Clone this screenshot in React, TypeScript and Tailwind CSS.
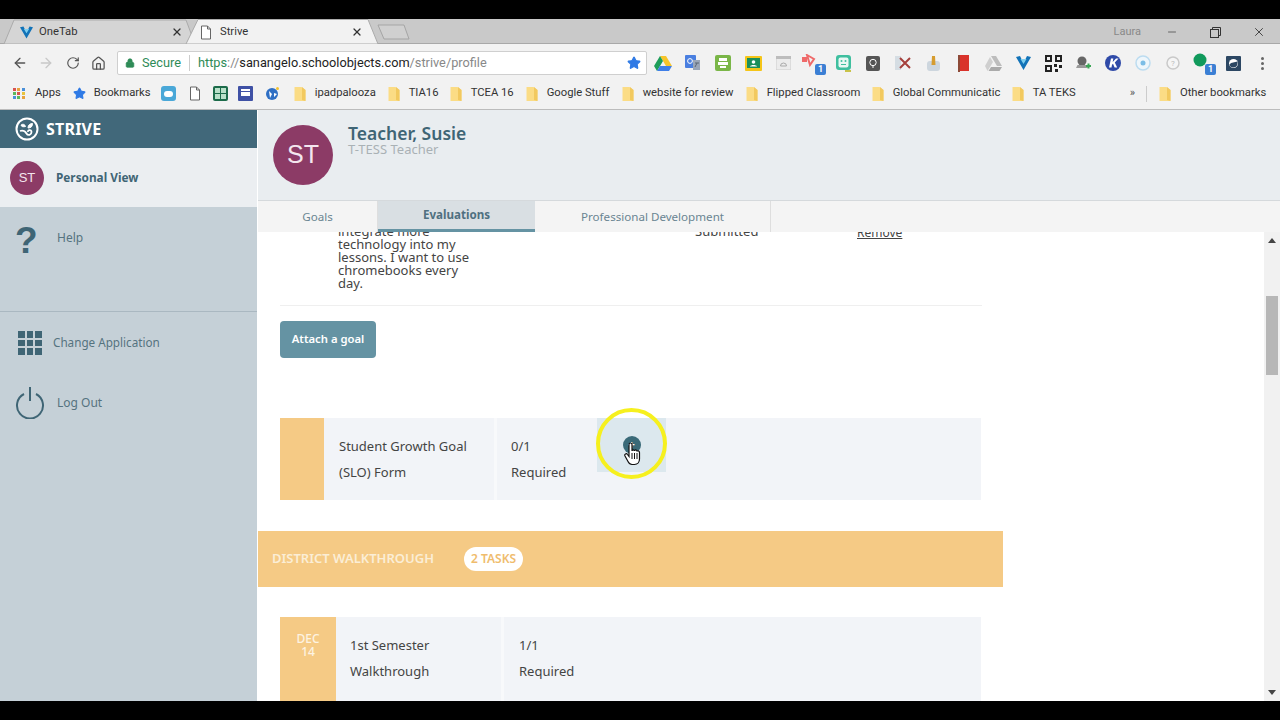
import { ArrowLeft, ArrowRight, RotateCw, Home, Star, Lock, X, Minus } from 'lucide-react';
import type { ReactNode } from 'react';

const Badge = () => (
  <span className="absolute left-[17px] top-[13px] flex h-[11px] w-[11px] items-center justify-center rounded-[2px] bg-[#3b7fd4] text-[9px] font-bold leading-none text-white">1</span>
);

const Folder = () => (
  <svg width="12" height="16" viewBox="0 0 12 16" className="shrink-0">
    <path d="M0.5 1h7l4 3v11h-11z" fill="#fbdc85" />
    <path d="M8 1v13l3.5 1V4z" fill="#f2c95f" />
  </svg>
);

const DocIcon = () => (
  <svg width="12" height="15" viewBox="0 0 12 15" fill="none" stroke="#666">
    <path d="M1.5 1h6l3 3v10h-9z" fill="#fff" />
    <path d="M7.5 1v3h3" />
  </svg>
);

const extIcons: ReactNode[] = [
  <svg width="18" height="16" viewBox="0 0 18 16"><path d="M6 1h6l6 10h-6z" fill="#f7c52b" /><path d="M6 1L0 11l3 5 6-10z" fill="#1e9e5a" /><path d="M3 16h12l3-5H6z" fill="#3f7fe8" /></svg>,
  <svg width="16" height="16" viewBox="0 0 16 16"><rect x="0" y="0" width="11" height="13" rx="1" fill="#4a7fe0" /><circle cx="5" cy="6" r="2.4" fill="none" stroke="#fff" /><path d="M8 5h7v10H8z" fill="#9aa6b8" /><path d="M10 8h4M12 8l-2 4" stroke="#5b6675" /></svg>,
  <svg width="16" height="16" viewBox="0 0 16 16"><rect width="16" height="16" rx="2" fill="#7ab648" /><rect x="4" y="3" width="8" height="3" fill="#fff" /><path d="M3 7h10v3H3z" fill="#fff" /><path d="M5 11h6v2H5z" fill="#fff" /></svg>,
  <svg width="17" height="15" viewBox="0 0 17 15"><rect width="17" height="15" rx="1" fill="#f5c518" /><rect x="2" y="2" width="13" height="10" fill="#1b8f5b" /><circle cx="8.5" cy="6" r="1.8" fill="#fff" /><path d="M5 10.5c.5-2 6.500-2 7 0z" fill="#fff" /></svg>,
  <svg width="15" height="14" viewBox="0 0 15 14"><rect width="15" height="14" rx="1" fill="#ececec" stroke="#ccc" /><rect width="15" height="3" fill="#bdbdbd" /><path d="M4.500 10a3 3 0 116 0z" fill="none" stroke="#aaa" /></svg>,
  <svg width="14" height="14" viewBox="0 0 14 14" fill="#ef6a6a" className="-translate-x-[4px] -translate-y-[2px]"><rect x="0" y="3" width="5" height="5" /><path d="M5 1l7 4-4 6z" fill="none" stroke="#ef6a6a" strokeWidth="2" /></svg>,
  <svg width="15" height="17" viewBox="0 0 15 17"><rect width="15" height="15" rx="3" fill="#3fbf9f" /><rect x="2.500" y="2.500" width="10" height="10" rx="2" fill="#e9f8f4" /><circle cx="5.500" cy="6" r="1" fill="#3fbf9f" /><circle cx="9.500" cy="6" r="1" fill="#3fbf9f" /><path d="M5 9.500h5" stroke="#3fbf9f" /><path d="M9 15h6v2H9z" fill="#c9c34a" /></svg>,
  <svg width="14" height="15" viewBox="0 0 14 15"><rect width="14" height="15" rx="2" fill="#555" /><circle cx="7" cy="6.500" r="3.200" fill="none" stroke="#fff" /><path d="M6 11h2" stroke="#fff" /></svg>,
  <svg width="17" height="16" viewBox="0 0 17 16"><rect x="0" y="1" width="6" height="14" fill="#d5dde3" /><path d="M5 3l10 10M15 3L5 13" stroke="#a5403c" strokeWidth="2" /></svg>,
  <svg width="15" height="17" viewBox="0 0 15 17"><rect x="1" y="6" width="13" height="10" rx="3" fill="#cdd6de" /><path d="M6 1h3l.5 9h-4z" fill="#d69c2f" /></svg>,
  <svg width="11" height="17" viewBox="0 0 11 17"><rect width="11" height="16" fill="#d9332b" /><rect width="2" height="17" fill="#8d4a38" /></svg>,
  <svg width="17" height="15" viewBox="0 0 17 15" fill="#bdbdbd"><path d="M6 0h5l6 10h-5z" /><path d="M5 1L0 10l2.500 5L8 6z" fill="#cfcfcf" /><path d="M3.500 15h11l2.500-4H6z" fill="#aaa" /></svg>,
  <svg width="15" height="14" viewBox="0 0 15 14"><path d="M0 1l4-1 3.500 7L11 0l4 1-7.500 13z" fill="#1273b8" /><path d="M4.500 3h6L7.500 8z" fill="#7fd0f0" /></svg>,
  <svg width="17" height="17" viewBox="0 0 17 17" fill="#222"><path d="M0 0h7v7H0zM10 0h7v7h-7zM0 10h7v7H0z" /><path d="M2 2h3v3H2zM12 2h3v3h-3zM2 12h3v3H2z" fill="#eee" /><path d="M9 9h3v3H9zM14 10h3v3h-3zM10 14h3v3h-3z" /></svg>,
  <svg width="17" height="16" viewBox="0 0 17 16"><circle cx="7" cy="6" r="4.500" fill="#666" /><path d="M1 13h12l-1.500-3h-9z" fill="#999" /><path d="M11 11h5M13.500 8.500v5" stroke="#3aa655" strokeWidth="2" /></svg>,
  <svg width="16" height="16" viewBox="0 0 16 16"><circle cx="8" cy="8" r="8" fill="#2f4aa8" /><path d="M6 3.500h2.300L7.700 7 11 3.500h2.500L9.800 7.500l2.400 5H9.600L8 8.800l-1 1-.5 2.700H4z" fill="#fff" /></svg>,
  <svg width="16" height="16" viewBox="0 0 16 16"><circle cx="8" cy="8" r="7" fill="#eef6fb" stroke="#bcdcf0" strokeWidth="1.500" /><circle cx="8" cy="8" r="2.500" fill="#7cbde6" /></svg>,
  <svg width="14" height="14" viewBox="0 0 14 14"><circle cx="7" cy="7" r="6" fill="#f5f5f5" stroke="#c9c9c9" strokeWidth="1.500" /><text x="7" y="10" textAnchor="middle" fontSize="8" fill="#bbb" fontFamily="Roboto, sans-serif">?</text></svg>,
  <svg width="14" height="14" viewBox="0 0 14 14" className="-translate-x-[3px] -translate-y-[3px]"><circle cx="7" cy="7" r="6.500" fill="#119a5c" /></svg>,
  <svg width="15" height="15" viewBox="0 0 15 15"><rect width="15" height="15" rx="1" fill="#2c4763" /><circle cx="7.500" cy="7.500" r="4.500" fill="#fff" /><path d="M3.500 8.500c2-2.500 5-2 8-3 .5 3-1 6-4 6s-4-1.500-4-3z" fill="#2c4763" /></svg>,
];

const badged = [5, 18];

const bookmarks = [
  { label: 'ipadpalooza', w: 94 },
  { label: 'TIA16', w: 62 },
  { label: 'TCEA 16', w: 76 },
  { label: 'Google Stuff', w: 96 },
  { label: 'website for review', w: 124 },
  { label: 'Flipped Classroom', w: 126 },
  { label: 'Global Communicatic', w: 140 },
  { label: 'TA TEKS', w: 116 },
];

const appFont = { fontFamily: '"Noto Sans", sans-serif' };

function BrowserChrome() {
  return (
    <div className="font-['Roboto',sans-serif] text-[#333]">
      <div className="relative flex h-[25px] items-center border-b border-[#a8a8a8] bg-[#c9c9c9] pt-[2px] text-[11.25px]">
        <svg width="420" height="25" viewBox="0 0 420 25" className="absolute left-0 top-0">
          <path d="M4 25L14 1h172l9 24z" fill="#d5d5d5" stroke="#ababab" />
          <path d="M186 25L198 0.500h170L378 25z" fill="#f2f2f2" stroke="#ababab" />
          <path d="M378 6h26l5 14h-25z" fill="#d0d0d0" stroke="#a5a5a5" />
        </svg>
        <div className="relative flex w-[190px] items-center pl-[20px]">
          <svg width="13" height="13" viewBox="0 0 15 14"><path d="M0 1l4-1 3.500 7L11 0l4 1-7.500 13z" fill="#1273b8" /><path d="M4.500 3h6L7.500 8z" fill="#7fd0f0" /></svg>
          <span className="ml-[6px] w-[94px]">OneTab</span>
          <X size={12} strokeWidth={2.500} className="ml-[38px] text-[#333]" />
        </div>
        <div className="relative flex items-center pl-[10px]">
          <DocIcon />
          <span className="ml-[8px] w-[60px]">Strive</span>
          <X size={12} strokeWidth={2.500} className="ml-[71px] text-[#333]" />
        </div>
        <div className="absolute right-0 top-0 flex h-[25px] items-center pt-[1px] text-[#666]">
          <span className="mr-[25px] text-[11px] text-[#888]">Laura</span>
          <Minus size={12} className="mr-[32px]" />
          <svg width="11" height="11" viewBox="0 0 11 11" fill="none" stroke="#333" className="mr-[31px]"><rect x="0.500" y="2.500" width="8" height="8" /><path d="M2.500 2.500v-2h8v8h-2" /></svg>
          <X size={14} strokeWidth={1.500} className="mr-[14px] text-[#333]" />
        </div>
      </div>

      <div className="flex h-[38px] items-center bg-[#f2f2f2] pl-[12px]">
        <ArrowLeft size={16} className="text-[#555]" />
        <ArrowRight size={16} className="ml-[10px] text-[#c8c8c8]" />
        <RotateCw size={14} className="ml-[12px] text-[#555]" />
        <Home size={15} className="ml-[11px] text-[#555]" />
        <div className="ml-[11px] flex h-[24px] w-[530px] items-center rounded-[2px] border border-[#cfcfcf] bg-white pl-[7px] text-[12.75px]">
          <Lock size={10} className="fill-[#2e8b57] text-[#2e8b57]" />
          <span className="ml-[7px] text-[#2e8b57]">Secure</span>
          <span className="ml-[8px] h-[16px] w-px bg-[#ccc]" />
          <span className="ml-[8px]">
            <span className="text-[#2e8b57]">https</span>
            <span className="text-[#888]">://</span>
            <span className="text-[#222]">sanangelo.schoolobjects.com</span>
            <span className="text-[#888]">/strive/profile</span>
          </span>
          <Star size={14} className="ml-auto mr-[5px] fill-[#2f7ae5] text-[#2f7ae5]" />
        </div>
        <div className="ml-[1px] flex">
          {extIcons.map((icon, i) => (
            <div key={i} className="relative flex h-[24px] w-[30px] items-center justify-center">
              {icon}
              {badged.includes(i) && <Badge />}
            </div>
          ))}
        </div>
        <div className="ml-[13px] flex flex-col gap-[2px]">
          <span className="h-[3px] w-[3px] rounded-full bg-[#666]" />
          <span className="h-[3px] w-[3px] rounded-full bg-[#666]" />
          <span className="h-[3px] w-[3px] rounded-full bg-[#666]" />
        </div>
      </div>

      <div className="flex h-[28px] items-center border-b border-[#bcbcbc] bg-[#f2f2f2] pb-[4px] pl-[13px] text-[11.25px]">
        <div className="grid h-[12px] w-[12px] shrink-0 grid-cols-3 gap-[1px]">
          {['#d9534f', '#e8a33d', '#4a90d9', '#5cb85c', '#d9534f', '#e8c33d', '#4a90d9', '#5cb85c', '#e8a33d'].map((c, i) => (
            <span key={i} className="h-[3px] w-[3px]" style={{ backgroundColor: c }} />
          ))}
        </div>
        <span className="ml-[10px]">Apps</span>
        <Star size={13} className="ml-[12px] fill-[#2f7ae5] text-[#2f7ae5]" />
        <span className="ml-[8px]">Bookmarks</span>
        <div className="ml-[10px] flex h-[15px] w-[15px] items-center justify-center rounded-[3px] bg-[#4aa8d8]">
          <span className="h-[6px] w-[9px] rounded-full bg-white" />
        </div>
        <div className="ml-[13px] flex"><DocIcon /></div>
        <div className="ml-[12px] grid h-[15px] w-[15px] grid-cols-2 gap-[1px] rounded-[2px] bg-[#1c6b4a] p-[2px]">
          <span className="bg-[#b9e0c9]" /><span className="bg-[#b9e0c9]" /><span className="bg-[#b9e0c9]" /><span className="bg-[#b9e0c9]" />
        </div>
        <div className="ml-[10px] flex h-[15px] w-[15px] flex-col gap-[1px] rounded-[1px] bg-[#3f51a5] p-[3px]">
          <span className="h-[2px] bg-white" />
          <span className="h-[4px] w-[9px] bg-white" />
        </div>
        <svg width="15" height="15" viewBox="0 0 15 15" className="ml-[12px] shrink-0">
          <circle cx="7" cy="8" r="6" fill="#2f6fc4" />
          <path d="M4 5l3 3-2 4zM9 7l3 1-3 3z" fill="#fff" />
          <circle cx="12.500" cy="2.500" r="1.500" fill="#f2c230" />
        </svg>
        <div className="ml-[14px] flex">
          {bookmarks.map(b => (
            <div key={b.label} className="flex items-center gap-[9px] overflow-hidden whitespace-nowrap" style={{ width: b.w }}>
              <Folder />
              <span>{b.label}</span>
            </div>
          ))}
        </div>
        <span className="ml-[2px] text-[#555]">»</span>
        <span className="ml-[11px] h-[16px] w-px bg-[#ccc]" />
        <div className="ml-[12px] flex items-center gap-[9px]">
          <Folder />
          <span>Other bookmarks</span>
        </div>
      </div>
    </div>
  );
}

function Sidebar() {
  return (
    <div className="flex w-[257px] shrink-0 flex-col bg-[#c5d0d7] text-[#55737f]">
      <div className="flex h-[38px] items-center bg-[#41687a] pl-[15px] text-white">
        <svg width="24" height="24" viewBox="0 0 24 24" fill="none" stroke="#fff">
          <circle cx="12" cy="12" r="10.500" strokeWidth="2" />
          <path d="M6 8c2-1.500 4-.5 4.500 1.500C8.500 10 6.500 10 6 8zM13 11c0-3 2-4.500 4.500-4.500 0 3-1.500 4.500-4.500 4.500z" fill="#fff" />
          <path d="M5 14c3-1 5 0 6.500 2.500s5 1.500 5-1.500-4-2-3.500 0" strokeWidth="1.800" />
        </svg>
        <span className="ml-[7px] text-[16px] font-bold tracking-[0.2px]">STRIVE</span>
      </div>
      <div className="flex h-[59px] items-center bg-[#ebeef1] pl-[10px]">
        <div className="flex h-[34px] w-[34px] items-center justify-center rounded-full bg-[#8c3b66] font-['Liberation_Sans',sans-serif] text-[13px] text-[#f3e6ee]">ST</div>
        <span className="ml-[12px] text-[11.8px] font-bold text-[#3f6575]">Personal View</span>
      </div>
      <div className="flex h-[105px] border-b border-[#aab8c1] pl-[15px] pt-[15px]">
        <span className="w-[42px] font-['Liberation_Sans',sans-serif] text-[37px] font-bold leading-[37px] text-[#3f6575]">?</span>
        <span className="mt-[8px] text-xs">Help</span>
      </div>
      <div className="flex h-[60px] items-center pl-[18px] pt-[2px]">
        <div className="grid h-[24px] w-[24px] grid-cols-3 gap-[2px]">
          {Array.from({ length: 9 }).map((_, i) => (
            <span key={i} className="bg-[#3f6575]" />
          ))}
        </div>
        <span className="ml-[11px] text-[11.7px]">Change Application</span>
      </div>
      <div className="flex h-[60px] items-center pl-[15px] pt-[2px]">
        <svg width="30" height="32" viewBox="0 0 30 32" fill="none" stroke="#3f6575" strokeWidth="2">
          <path d="M9 7a13 13 0 1012 0" />
          <path d="M15 0v14" />
        </svg>
        <span className="ml-[12px] text-xs">Log Out</span>
      </div>
    </div>
  );
}

function TaskCell({ lines, className }: { lines: string[]; className: string }) {
  return (
    <div className={`pt-[15px] text-[13px] leading-[26px] text-[#444] ${className}`}>
      {lines.map(l => <div key={l}>{l}</div>)}
    </div>
  );
}

function Content() {
  return (
    <div className="relative min-w-0 flex-1 overflow-hidden bg-white">
      <div className="-mt-[7px] ml-[22px] w-[702px]">
        <div className="flex border-b border-[#efefef] pb-[15px] text-[13px] leading-[13px] text-[#444]">
          <div className="ml-[58px] w-[135px]">integrate more technology into my lessons. I want to use chromebooks every day.</div>
          <div className="ml-[222px] w-[162px]">Submitted</div>
          <div className="text-xs underline">Remove</div>
        </div>
        <button className="mt-[15px] flex h-[37px] w-[96px] items-center justify-center rounded-[4px] bg-[#6593a3] text-[11.3px] font-semibold text-white">Attach a goal</button>

        <div className="mt-[60px] flex h-[82px] w-[701px] bg-[#f2f4f8]">
          <div className="w-[44px] bg-[#f5ca85]" />
          <TaskCell lines={['Student Growth Goal', '(SLO) Form']} className="w-[173px] border-r-[3px] border-r-[#f8f9fb] pl-[15px]" />
          <TaskCell lines={['0/1', 'Required']} className="w-[100px] pl-[14px]" />
          <div className="relative flex h-[54px] w-[69px] items-center justify-center bg-[#dce8ee]">
            <div className="flex h-[18px] w-[18px] items-center justify-center rounded-full bg-[#3a6a78] text-xs font-bold leading-none text-white">+</div>
            <div className="absolute left-[-1px] top-[-10px] h-[71px] w-[71px] rounded-full border-[4px] border-[#f6f01e]" />
            <svg width="18" height="24" viewBox="0 0 18 24" className="absolute left-[27px] top-[24px]">
              <path d="M5 2.500c0-2 3-2 3 0V9c0-1.500 2.500-1.500 2.500 0 0-1.500 2.500-1.500 2.500 0.500 0-1 2.500-1 2.500 1V17c0 3-2 5.500-5 5.500H8c-2 0-3-1-4-3L1 14c-1-2 1.500-3 2.500-1.500L5 14.500z" fill="#fff" stroke="#111" strokeWidth="1.200" />
              <path d="M8 11v6M10.500 11v6M13 11v6" stroke="#111" />
            </svg>
          </div>
        </div>

        <div className="-ml-[22px] mt-[31px] flex h-[56px] w-[745px] items-center bg-[#f5ca85] pl-[14px]">
          <span className="text-[13px] font-semibold text-[#fbeed6]">DISTRICT WALKTHROUGH</span>
          <span className="ml-[30px] flex h-[24px] w-[59px] items-center justify-center rounded-full bg-white text-xs font-semibold text-[#efbc6d]">2 TASKS</span>
        </div>

        <div className="mt-[30px] flex h-[90px] w-[701px] bg-[#f2f4f8]">
          <div className="w-[56px] bg-[#f5ca85] pt-[15px] text-center text-xs font-medium leading-[13px] text-[#fdf3e2]">DEC<br />14</div>
          <TaskCell lines={['1st Semester', 'Walkthrough']} className="w-[168px] border-r-[3px] border-r-[#f8f9fb] pl-[14px]" />
          <TaskCell lines={['1/1', 'Required']} className="pl-[15px]" />
        </div>
      </div>
    </div>
  );
}

export default function App() {
  return (
    <div className="flex h-[720px] w-[1280px] flex-col overflow-hidden bg-black">
      <div className="h-[19px] shrink-0 bg-black" />
      <BrowserChrome />
      <div className="flex h-[591px] shrink-0 bg-white" style={appFont}>
        <Sidebar />
        <div className="ml-px flex min-w-0 flex-1 flex-col">
          <div className="flex h-[90px] shrink-0 bg-[#e9edf0] pl-[15px] pt-[15px]">
            <div className="flex h-[60px] w-[60px] items-center justify-center rounded-full bg-[#8c3b66] font-['Liberation_Sans',sans-serif] text-[25px] text-[#f3e6ee]">ST</div>
            <div className="-mt-[1px] ml-[15px]">
              <div className="text-[17.5px] font-semibold leading-[18px] text-[#3f6575]">Teacher, Susie</div>
              <div className="text-[13px] leading-[15px] text-[#a9b1b5]">T-TESS Teacher</div>
            </div>
          </div>
          <div className="flex h-[32px] shrink-0 border-t border-[#d5d9dc] bg-[#f4f4f4] text-[11.6px] text-[#6a8592]">
            <div className="flex w-[120px] items-center justify-center border-r border-[#dedede]">Goals</div>
            <div className="flex w-[157px] items-center justify-center border-b-[3px] border-[#6593a3] bg-[#d9dfe3] font-bold text-[#4f7080]">Evaluations</div>
            <div className="flex w-[236px] items-center justify-center border-r border-[#dedede]">Professional Development</div>
          </div>
          <div className="flex min-h-0 flex-1">
            <Content />
            <div className="relative flex w-[16px] shrink-0 flex-col items-center bg-[#f1f1f1]">
              <span className="mt-[6px] h-0 w-0 border-x-[4px] border-b-[5px] border-x-transparent border-b-[#444]" />
              <span className="mt-[53px] h-[79px] w-[12px] bg-[#b7b7b7]" />
              <span className="mt-auto mb-[6px] h-0 w-0 border-x-[4px] border-t-[5px] border-x-transparent border-t-[#444]" />
            </div>
          </div>
        </div>
      </div>
      <div className="h-[20px] shrink-0 bg-black" />
    </div>
  );
}
